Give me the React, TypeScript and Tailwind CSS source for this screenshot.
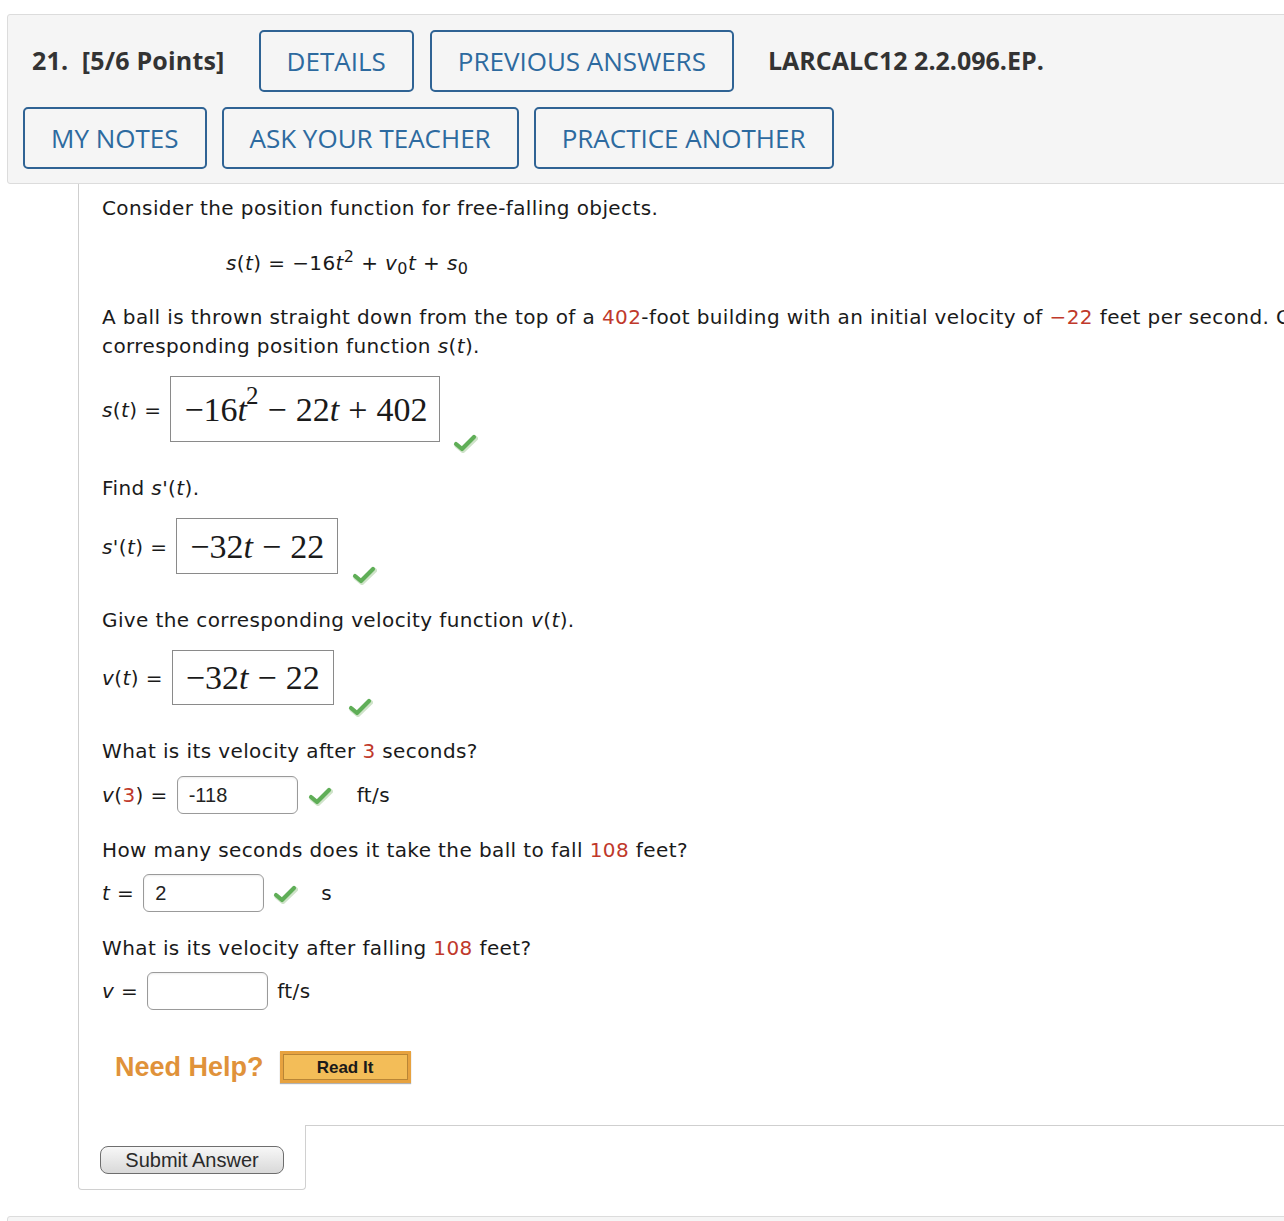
import React from "react";

const body = { fontFamily: '"DejaVu Sans", Verdana, sans-serif' };
const head = { fontFamily: '"Open Sans", "Liberation Sans", sans-serif' };
const serif = { fontFamily: '"Liberation Serif", "DejaVu Serif", serif' };
const arial = { fontFamily: '"Liberation Sans", Arial, sans-serif' };

const Check = ({ className = "" }: { className?: string }) => (
  <svg viewBox="0 0 26 20" className={`w-[26px] h-[20px] shrink-0 ${className}`}>
    <path d="M4 11.5 L10 16.5 L22.5 4.5" fill="none" stroke="#cfe3c9" strokeWidth="5" strokeLinecap="round" strokeLinejoin="round" transform="translate(1 1)" />
    <path d="M4 11 L10 16 L22 4" fill="none" stroke="#5fae57" strokeWidth="4.2" strokeLinecap="round" strokeLinejoin="round" />
  </svg>
);

const HeadButton = ({ label }: { label: string }) => (
  <div className="h-[62px] px-[26px] flex items-center border-[2.5px] border-[#2f6394] rounded-[5px] text-[26px] font-medium text-[#2d6a9f] whitespace-nowrap">
    {label}
  </div>
);

const Red = ({ children }: { children: React.ReactNode }) => (
  <span className="text-[#c0392b]">{children}</span>
);

const Input = ({ value, className = "" }: { value: string; className?: string }) => (
  <div
    className={`h-[38px] w-[121px] rounded-[6px] border border-[#9a9a9a] flex items-center px-[11px] text-[20px] tracking-normal text-[#222] shadow-[inset_0_1px_2px_rgba(0,0,0,0.08)] ${className}`}
    style={arial}
  >
    {value}
  </div>
);

const I = ({ children }: { children: React.ReactNode }) => <i>{children}</i>;

// operator with TeX-like spacing
const Op = ({ children }: { children: React.ReactNode }) => <span className="mx-[9px]">{children}</span>;

export default function App() {
  return (
    <div className="w-full min-h-screen bg-white overflow-hidden">
      <div className="w-[1500px] pt-[14px]">
        {/* question header */}
        <div className="ml-[7px] bg-[#f5f5f5] border border-[#dcdcdc] rounded-[3px] pt-[15px] pb-[14px] pl-[15px] flex flex-col gap-[15px]" style={head}>
          <div className="flex items-center">
            <div className="pl-[9px] mr-[34px] text-[25px] font-bold text-[#333] whitespace-nowrap tracking-[0.2px]">
              21.&nbsp; [5/6 Points]
            </div>
            <div className="flex gap-4">
              <HeadButton label="DETAILS" />
              <HeadButton label="PREVIOUS ANSWERS" />
            </div>
            <div className="ml-[34px] text-[25px] font-bold text-[#333] whitespace-nowrap">LARCALC12 2.2.096.EP.</div>
          </div>
          <div className="flex gap-[15px]">
            <HeadButton label="MY NOTES" />
            <HeadButton label="ASK YOUR TEACHER" />
            <HeadButton label="PRACTICE ANOTHER" />
          </div>
        </div>

        {/* question body */}
        <div className="ml-[78px] border-l border-[#cfcfcf] pl-[23px] pt-[10px] pb-[42px] text-[20px] tracking-[0.4px] leading-[29px] text-[#1a1a1a]" style={body}>
          <p>Consider the position function for free-falling objects.</p>
          <p className="mt-[26px] pl-[124px]">
            <I>s</I>(<I>t</I>) = −16<I>t</I>
            <sup className="text-[16px]">2</sup> + <I>v</I>
            <sub className="text-[16px]">0</sub>
            <I>t</I> + <I>s</I>
            <sub className="text-[16px]">0</sub>
          </p>
          <p className="mt-[25px] whitespace-nowrap">
            A ball is thrown straight down from the top of a <Red>402</Red>-foot building with an initial velocity of <Red>−22</Red> feet per second. Give the
            <br />
            corresponding position function <I>s</I>(<I>t</I>).
          </p>

          <div className="mt-[15px] flex items-start h-[66px]">
            <span className="mt-[20px] mr-[9px]">
              <I>s</I>(<I>t</I>) =
            </span>
            <div className="h-[66px] border border-[#8a8a8a] flex items-center pl-[13px] pr-[12px] text-[34px] tracking-normal" style={serif}>
              −16<I>t</I>
              <span className="text-[25px] -ml-[1px] relative -top-[14px]">2</span>
              <Op>−</Op>22<I>t</I>
              <Op>+</Op>402
            </div>
            <Check className="mt-[57px] ml-[12px]" />
          </div>

          <p className="mt-[32px]">
            Find <I>s</I>'(<I>t</I>).
          </p>
          <div className="mt-[15px] flex items-start h-[56px]">
            <span className="mt-[15px] mr-[9px]">
              <I>s</I>'(<I>t</I>) =
            </span>
            <div className="h-[56px] border border-[#8a8a8a] flex items-center pl-[13px] pr-[13px] text-[34px] tracking-normal" style={serif}>
              −32<I>t</I>
              <Op>−</Op>22
            </div>
            <Check className="mt-[47px] ml-[13px]" />
          </div>

          <p className="mt-[32px]">
            Give the corresponding velocity function <I>v</I>(<I>t</I>).
          </p>
          <div className="mt-[15px] flex items-start h-[55px]">
            <span className="mt-[14px] mr-[9px]">
              <I>v</I>(<I>t</I>) =
            </span>
            <div className="h-[55px] border border-[#8a8a8a] flex items-center pl-[13px] pr-[13px] text-[34px] tracking-normal" style={serif}>
              −32<I>t</I>
              <Op>−</Op>22
            </div>
            <Check className="mt-[47px] ml-[13px]" />
          </div>

          <p className="mt-[32px]">
            What is its velocity after <Red>3</Red> seconds?
          </p>
          <div className="mt-[10px] flex items-center h-[38px]">
            <span className="mr-[9px]">
              <I>v</I>(<Red>3</Red>) =
            </span>
            <Input value="-118" />
            <Check className="ml-[9px] mt-[2px]" />
            <span className="ml-[24px]">ft/s</span>
          </div>

          <p className="mt-[22px]">
            How many seconds does it take the ball to fall <Red>108</Red> feet?
          </p>
          <div className="mt-[9px] flex items-center h-[38px]">
            <span className="mr-[9px]">
              <I>t</I> =
            </span>
            <Input value="2" />
            <Check className="ml-[8px] mt-[2px]" />
            <span className="ml-[23px]">s</span>
          </div>

          <p className="mt-[22px]">
            What is its velocity after falling <Red>108</Red> feet?
          </p>
          <div className="mt-[9px] flex items-center h-[38px]">
            <span className="mr-[9px]">
              <I>v</I> =
            </span>
            <Input value="" />
            <span className="ml-[9px]">ft/s</span>
          </div>

          <div className="mt-[41px] pl-[13px] flex items-center gap-[16px] tracking-normal" style={arial}>
            <span className="text-[27px] font-bold text-[#e0923a]">Need Help?</span>
            <div className="h-[32px] w-[131px] bg-[#e7a23f] p-[3px] shadow-[0_1px_1px_rgba(0,0,0,0.3)]">
              <div className="h-full w-full bg-[#f3bd58] border border-[#b98535] flex items-center justify-center text-[17px] font-bold text-[#1a1a1a]">
                Read It
              </div>
            </div>
          </div>
        </div>

        {/* submit row */}
        <div className="flex ml-[78px]">
          <div className="w-[228px] h-[65px] border-l border-r border-b border-[#d0d0d0] rounded-b-[4px] pl-[21px] pt-[21px]">
            <button
              className="h-[28px] w-[184px] rounded-[8px] border border-[#6e6e6e] bg-gradient-to-b from-[#f7f7f7] to-[#d9d9d9] text-[20px] text-[#2a2a2a] leading-none"
              style={arial}
            >
              Submit Answer
            </button>
          </div>
          <div className="flex-1 border-t border-[#cfcfcf]" />
        </div>

        {/* next question */}
        <div className="mt-[26px] ml-[7px] h-[60px] bg-[#f5f5f5] border border-[#dcdcdc] rounded-[3px]" />
      </div>
    </div>
  );
}
